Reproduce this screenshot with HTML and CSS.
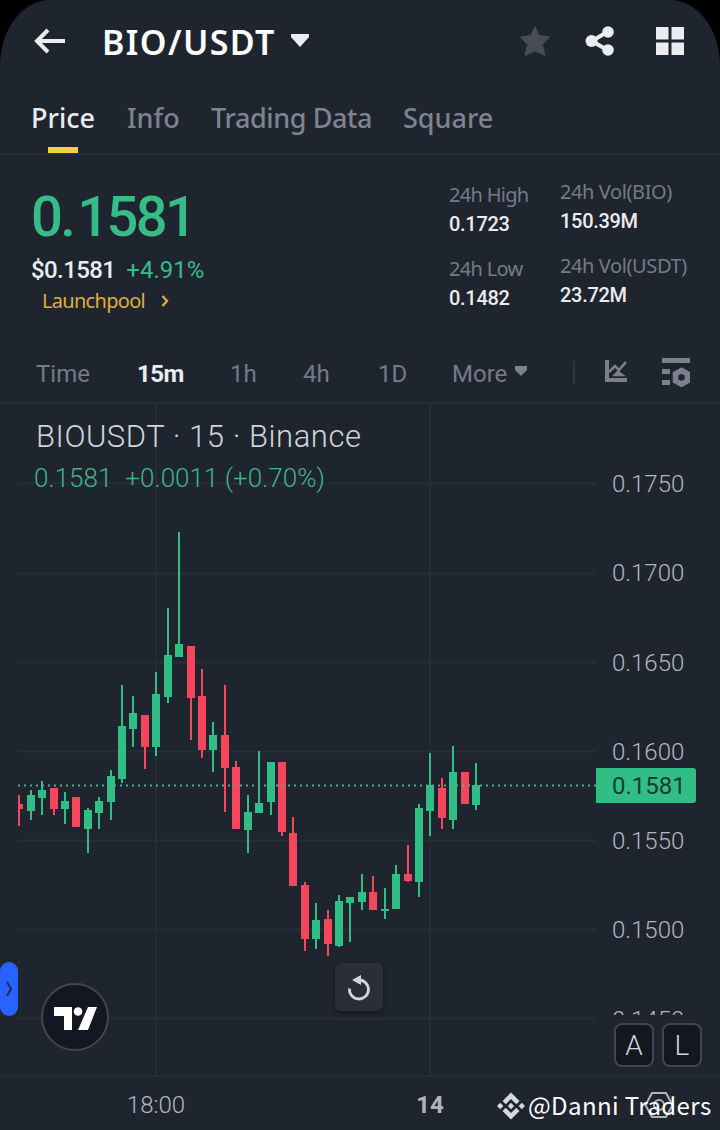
FILE: index.html
```html
<!DOCTYPE html>
<html lang="en">
<head>
    <meta charset="UTF-8">
    <meta name="viewport" content="width=device-width, initial-scale=1.0">
    <title>BIO/USDT</title>
    <link rel="stylesheet" href="styles.css">
</head>
<body>
    <div class="app">
        <header class="header">
            <svg class="back" width="32" height="26" viewBox="0 0 32 26"><path d="M14 2 3 13l11 11M3 13h28" fill="none" stroke="#eaecef" stroke-width="4"/></svg>
            <h1>BIO/USDT</h1>
            <svg class="caret" width="20" height="16" viewBox="0 0 20 16"><path d="M1 1h18v3l-9 10-9-10z" fill="#eaecef"/></svg>
            <div class="actions">
                <svg width="32" height="32" viewBox="0 0 32 32"><path d="m16 1.500 4 9 10.500 1.500-7 7.500 2.500 11-10-4.500-10 4.500 2.500-11-7-7.500L12 10.500z" fill="#474d57" stroke="#474d57" stroke-linejoin="round"/></svg>
                <svg width="32" height="32" viewBox="0 0 32 32"><path d="M24 6.500 8 16l16 9.500" fill="none" stroke="#eaecef" stroke-width="4"/><circle cx="24" cy="7" r="5.800" fill="#eaecef"/><circle cx="7.500" cy="16" r="6" fill="#eaecef"/><circle cx="24" cy="25" r="5.800" fill="#eaecef"/></svg>
                <svg width="28" height="28" viewBox="0 0 28 28"><path d="M0 0h12.500v12.500H0zM15.500 0H28v12.500H15.500zM0 15.500h12.500V28H0zM15.500 15.500H28V28H15.500z" fill="#eaecef"/></svg>
            </div>
        </header>

        <nav class="tabs">
            <a class="tab tab-price active">Price</a>
            <a class="tab tab-info">Info</a>
            <a class="tab tab-data">Trading Data</a>
            <a class="tab tab-square">Square</a>
        </nav>

        <section class="summary">
            <div class="price">
                <div class="last">0<span class="point">.</span>1581</div>
                <div class="change"><span class="usd">$0.1581</span><span class="up">+4.91%</span></div>
                <div class="tag">Launchpool <svg width="8" height="12" viewBox="0 0 8 12"><path d="m1.500 1 4.500 5-4.500 5" fill="none" stroke="#dcae3c" stroke-width="2.400"/></svg></div>
            </div>
            <div class="stats stats-range">
                <div class="stat"><span class="name">24h High</span><span class="value">0.1723</span></div>
                <div class="stat"><span class="name">24h Low</span><span class="value">0.1482</span></div>
            </div>
            <div class="stats stats-volume">
                <div class="stat"><span class="name">24h Vol(BIO)</span><span class="value">150.39M</span></div>
                <div class="stat"><span class="name">24h Vol(USDT)</span><span class="value">23.72M</span></div>
            </div>
        </section>

        <div class="intervals">
            <span class="interval">Time</span>
            <span class="interval selected">15m</span>
            <span class="interval">1h</span>
            <span class="interval">4h</span>
            <span class="interval">1D</span>
            <span class="interval">More</span>
            <svg class="more-caret" width="12" height="10" viewBox="0 0 12 10"><path d="M0 0h12v4L6 10 0 4z" fill="#7b828e"/></svg>
            <span class="divider"></span>
            <svg class="tool" width="22" height="24" viewBox="0 0 22 24"><path d="M2 1v20h20" fill="none" stroke="#7b818c" stroke-width="4"/><path d="m4 13 6-6 4 4 7-8M10 16l3-3 4 3z" fill="none" stroke="#7b818c" stroke-width="2.600"/></svg>
            <svg class="tool-settings" width="28" height="29" viewBox="0 0 28 29"><path d="M0 0h28v5H0zM0 11h8v5H0zM0 22h8v5H0z" fill="#7b818c"/><path d="m19.500 12.500 6 3.300v7l-6 3.400-6-3.400v-7z" fill="none" stroke="#7b818c" stroke-width="5.500"/></svg>
        </div>

        <main class="chart">
            <div class="plot">
                <svg id="candles" width="596" height="672" viewBox="0 404 596 672"></svg>
                <div class="scale">
                    <span>0.1750</span>
                    <span>0.1700</span>
                    <span>0.1650</span>
                    <span>0.1600</span>
                    <span>0.1550</span>
                    <span>0.1500</span>
                    <span>0.1450</span>
                </div>
            </div>
            <div class="times">
                <span>18:00</span>
                <span class="day">14</span>
                <svg width="30" height="28" viewBox="0 0 30 28"><path d="M8 2h14l6.500 12L22 26H8L1.500 14z" fill="none" stroke="#b2b5be" stroke-width="2"/><circle cx="15" cy="14" r="5" fill="none" stroke="#b2b5be" stroke-width="2"/></svg>
            </div>

            <div class="legend">
                <div class="symbol">BIOUSDT · 15 · Binance</div>
                <div class="quote"><span>0.1581</span><span>+0.0011 (+0.70%)</span></div>
            </div>
            <div class="price-label">0.1581</div>
            <div class="handle"><svg width="8" height="16" viewBox="0 0 8 16"><path d="m2 1 4 7-4 7" fill="none" stroke="#1e2a50" stroke-width="2"/></svg></div>
            <div class="tv-logo"><svg width="44" height="24" viewBox="0 0 44 24"><path d="M0 0h18v23h-8V9H0zM34 0h9l-9 23H24z" fill="#fff"/><circle cx="24" cy="4.500" r="4.300" fill="#fff"/></svg></div>
            <div class="reset"><svg width="24" height="26" viewBox="0 0 24 26"><path d="M2.500 13.500A9.500 9.500 0 1 0 12 5" fill="none" stroke="#d1d4dc" stroke-width="2.800"/><path d="m5 5 9-5v10z" fill="#d1d4dc"/></svg></div>
            <div class="modes"><span>A</span><span>L</span></div>
            <div class="watermark">
                <svg width="28" height="28" viewBox="0 0 28 28"><path d="m14 .5 8.500 8.500-3.200 3.200L14 6.900l-5.300 5.300L5.500 9zM5.500 19l3.200-3.200 5.300 5.300 5.300-5.300 3.200 3.200-8.500 8.500zM14 10.800l3.200 3.200-3.200 3.200-3.200-3.200zM3.200 10.800 6.400 14l-3.200 3.200L0 14zM24.800 10.800 28 14l-3.200 3.200-3.200-3.200z" fill="#d5d8df"/></svg>
                <span>@Danni Traders</span>
            </div>
        </main>
    </div>

    <script>
        // x, high, body top, body bottom, low, direction
        const candles = [
            [19, 795, 804, 809, 826, 'down'], [31, 790, 795, 811, 820, 'up'],
            [42, 781, 790, 798, 815, 'up'], [54, 788, 788, 809, 815, 'down'],
            [65, 792, 801, 809, 824, 'up'], [76, 797, 797, 827, 827, 'down'],
            [88, 808, 810, 829, 853, 'up'], [99, 797, 801, 813, 829, 'up'],
            [111, 770, 776, 802, 820, 'up'], [122, 685, 726, 779, 783, 'up'],
            [133, 696, 713, 729, 747, 'up'], [145, 715, 715, 747, 769, 'down'],
            [156, 672, 694, 747, 756, 'up'], [168, 608, 655, 697, 703, 'up'],
            [179, 532, 644, 657, 657, 'up'], [191, 646, 646, 698, 740, 'down'],
            [202, 669, 696, 750, 758, 'down'], [213, 722, 735, 750, 772, 'up'],
            [225, 685, 735, 768, 812, 'down'], [236, 761, 767, 829, 829, 'down'],
            [248, 795, 812, 830, 853, 'up'], [259, 751, 803, 813, 813, 'up'],
            [271, 762, 762, 802, 815, 'up'], [282, 762, 762, 832, 836, 'down'],
            [293, 817, 833, 886, 886, 'down'], [305, 882, 885, 939, 951, 'down'],
            [316, 903, 920, 939, 949, 'up'], [328, 910, 919, 944, 956, 'down'],
            [339, 895, 901, 946, 947, 'up'], [350, 897, 897, 903, 942, 'up'],
            [362, 874, 892, 902, 910, 'up'], [373, 876, 892, 910, 910, 'down'],
            [385, 888, 909, 911, 919, 'up'], [396, 865, 874, 909, 909, 'up'],
            [408, 845, 874, 881, 882, 'down'], [419, 804, 808, 882, 897, 'up'],
            [430, 753, 785, 811, 836, 'up'], [442, 778, 788, 818, 829, 'down'],
            [453, 746, 772, 820, 829, 'up'], [465, 772, 772, 804, 804, 'down'],
            [476, 763, 785, 805, 810, 'up']
        ];

        let svg = '';
        [483.5, 573.5, 662.5, 751.5, 840.5, 929.5, 1018.5].forEach(y => {
            svg += `<path class="grid" d="M18 ${y}H596"/>`;
        });
        svg += '<path class="grid" d="M156 404V1076M430 404V1076"/>';
        candles.forEach(([x, high, top, bottom, low, type]) => {
            const left = Math.max(18, x - 4);
            svg += `<rect class="${type} wick" x="${x - 1}" y="${high}" width="2" height="${low - high}"/>`;
            svg += `<rect class="${type}" x="${left}" y="${top}" width="${x + 4 - left}" height="${bottom - top}"/>`;
        });
        svg += '<path class="last-line" d="M18 785.5H596"/>';
        document.getElementById('candles').innerHTML = svg;
    </script>
</body>
</html>
```
FILE: styles.css
```css
* { box-sizing: border-box; }
body { margin: 0; background: #000; font-family: "Noto Sans", sans-serif; color: #eaecef; }
svg { display: block; flex: none; }
.app { width: 720px; height: 1130px; background: #1f252f; border-radius: 50px 50px 0 0 / 66px 66px 0 0; overflow: hidden; white-space: nowrap; }

.header { display: flex; align-items: center; height: 84px; padding: 0 36px 0 34px; }
.header svg { margin-bottom: 2px; }
h1 { width: 172px; margin: 0 0 0 36px; padding-top: 1px; font-size: 34px; font-weight: 600; line-height: 83px; letter-spacing: 1.400px; color: #fff; }
.caret { margin-left: 16px; }
.actions { display: flex; align-items: center; gap: 33px; margin-left: auto; }
.actions svg:last-child { margin-left: 7px; }

.tabs { display: flex; gap: 31px; height: 71px; padding-left: 32px; border-bottom: 2px solid #272e38; font-size: 27px; font-weight: 500; line-height: 68px; color: #7d838f; }
.tab { position: relative; }
.tab-price { width: 64px; margin-left: -1px; margin-right: 1px; }
.tab-info { width: 53px; }
.tab-data { width: 161px; letter-spacing: -.4px; }
.active { color: #eaecef; }
.active::after { content: ""; position: absolute; left: 17px; bottom: 0; width: 30px; height: 6px; background: #f0d048; }

.summary { display: flex; height: 188px; }
.price { width: 449px; padding: 30px 0 0 31px; }
.last { font: 500 56px/64px Roboto, sans-serif; letter-spacing: -2.600px; color: #36bd87; }
.point { letter-spacing: 1.400px; }
.change { display: flex; gap: 11px; font: 500 24px/30px Roboto, sans-serif; margin-top: 6px; letter-spacing: -.6px; }
.change .up { font-weight: 400; letter-spacing: 0; color: #36bd87; }
.tag { display: flex; align-items: center; gap: 16px; padding-left: 11px; font-size: 20px; line-height: 31px; letter-spacing: -.7px; color: #dcae3c; }
.stats { display: flex; flex-direction: column; gap: 14px; }
.stats-range { width: 111px; padding-top: 25px; }
.stats-volume { padding-top: 22px; }
.stat { display: flex; flex-direction: column; }
.name { font-size: 20px; line-height: 29px; letter-spacing: -.4px; color: #747b87; }
.stats-range .name { letter-spacing: -.7px; }
.value { padding-bottom: 1px; font: 500 20px/30px Roboto, sans-serif; letter-spacing: -.3px; }

.intervals { display: flex; align-items: center; height: 61px; padding-left: 36px; border-bottom: 2px solid #272e38; font: 400 24px/60px Roboto, sans-serif; color: #747b87; }
.interval { width: 53px; margin-right: 48px; padding-top: 2px; }
.interval.selected { width: 46px; margin-right: 47px; font-weight: 700; letter-spacing: -.5px; color: #eaecef; }
.interval:nth-child(3) { width: 25px; }
.interval:nth-child(4) { width: 26px; margin-right: 49px; }
.interval:nth-child(5) { width: 27px; margin-right: 47px; }
.interval:nth-child(6) { margin-right: 10px; }
.more-caret { margin-bottom: 4px; }
.divider { width: 2px; height: 24px; margin: 0 30px 0 46px; background: #303743; }
.tool { margin-bottom: 3px; }
.tool-settings { margin-left: 35px; }

.chart { position: relative; height: 726px; font-family: Roboto, sans-serif; }
.plot { display: flex; height: 673px; border-bottom: 1px solid #29303a; }
.grid { fill: none; stroke: #282e39; stroke-width: 2; }
.up, .last-line { fill: #31be86; }
.down { fill: #f6465d; }
.last-line { stroke: #4cae8c; stroke-width: 2; stroke-dasharray: 2 4; }
.scale { display: flex; flex-direction: column; height: 611px; padding: 36px 0 0 16px; overflow: hidden; font-size: 24px; font-weight: 300; line-height: 89.300px; color: #b2b5be; }
.times { display: flex; align-items: center; height: 53px; padding: 2px 0 0 19px; font-size: 24px; font-weight: 300; color: #b2b5be; }
.times span { width: 274px; text-align: center; }
.times .day { font-weight: 700; }
.times svg { margin-left: 77px; }

.legend { position: absolute; left: 36px; top: 14px; }
.symbol { font-size: 31px; font-weight: 300; line-height: 38px; letter-spacing: .55px; color: #d1d4dc; }
.quote { display: flex; gap: 13px; margin: 4px 0 0 -2px; font-size: 26px; font-weight: 300; line-height: 36px; color: #3fb486; }
.price-label { position: absolute; left: 596px; top: 364px; width: 100px; height: 35px; padding: 1px 0 0 16px; border-radius: 0 3px 3px 0; background: #31be86; font-size: 24px; line-height: 35px; color: #173c32; }
.handle { position: absolute; left: 0; top: 558px; display: flex; align-items: center; justify-content: center; width: 18px; height: 54px; border-radius: 9px; background: #2962ff; }
.tv-logo { position: absolute; left: 41px; top: 579px; display: flex; align-items: center; justify-content: center; width: 68px; height: 68px; padding: 3px 0 0 1px; border: 2px solid #434651; border-radius: 50%; background: #121722; }
.reset { position: absolute; left: 335px; top: 559px; display: flex; align-items: center; justify-content: center; width: 48px; height: 48px; padding-top: 2px; border-radius: 6px; background: #292e39; box-shadow: 0 2px 4px rgba(0, 0, 0, .4); }
.modes { position: absolute; left: 614px; top: 619px; display: flex; gap: 8px; font-size: 28px; font-weight: 300; line-height: 41px; text-align: center; color: #d1d4dc; }
.modes span { width: 40px; height: 44px; border: 2px solid #434651; border-radius: 8px; background: #121722; }
.watermark { position: absolute; left: 497px; top: 684px; display: flex; align-items: center; gap: 3px; font: 400 24px/36px "Noto Sans CJK SC", sans-serif; letter-spacing: .4px; color: #fff; }
.watermark span { margin-top: -1px; }
.watermark svg { margin-top: 1px; }
```
